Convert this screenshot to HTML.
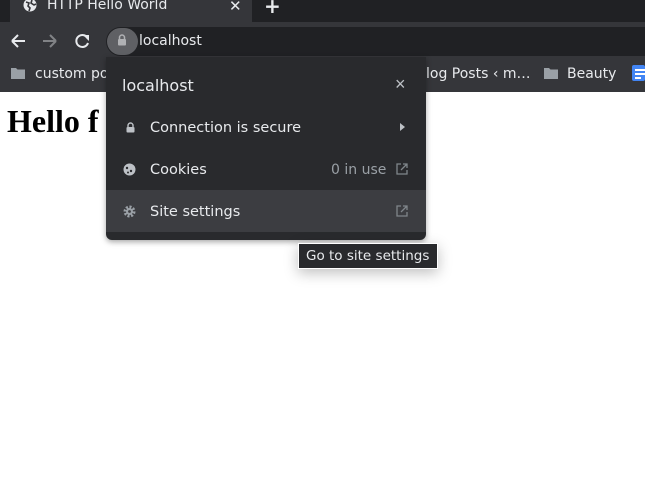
<!DOCTYPE html>
<html><head><style>
*{margin:0;padding:0;box-sizing:border-box}
body{width:645px;height:478px;overflow:hidden;background:#fff;font-family:"Liberation Sans","DejaVu Sans",sans-serif;position:relative}
.a{position:absolute}
.t{color:#e8eaed;font-family:"DejaVu Sans","Liberation Sans",sans-serif}
</style></head><body>
<div class="a" style="left:0;top:0;width:645px;height:22px;background:#202124"></div>
<div class="a" style="left:10px;top:0;width:242px;height:22px;background:#35363a"></div>
<div class="a" style="left:0;top:0;width:10px;height:22px;background:#202124;border-radius:0 0 8px 0"></div>
<div class="a" style="left:252px;top:0;width:393px;height:22px;background:#202124;border-radius:0 0 0 8px"></div>
<svg class="a" style="left:23px;top:-2px" width="14" height="14" viewBox="0 0 14 14"><circle cx="7" cy="7" r="6.5" fill="#e8eaed"/><path d="M3 4 L6 5 L5 8 L7 10 L6 13 M9 2 L8 5 L11 7 L13 6" stroke="#35363a" stroke-width="1.6" fill="none"/></svg>
<div class="a t" style="left:47px;top:-3px;font-size:14px">HTTP Hello World</div>
<div class="a t" style="left:229px;top:-3px;font-size:15px">✕</div>
<div class="a t" style="left:264px;top:-6px;font-size:20px;font-weight:bold">+</div>
<div class="a" style="left:0;top:22px;width:645px;height:34px;background:#35363a"></div>
<svg class="a" style="left:10px;top:32px" width="80" height="18" viewBox="0 0 80 18"><path d="M2 9H15M2 9L8 3M2 9L8 15" stroke="#e8eaed" stroke-width="2" fill="none"/><path d="M33 9H46M46 9L40 3M46 9L40 15" stroke="#818386" stroke-width="2" fill="none"/><path d="M79 7A6 6 0 1 0 79 11" stroke="#e8eaed" stroke-width="2" fill="none" transform="translate(-1,0)"/><path d="M74 3H80V9Z" fill="#e8eaed" transform="translate(-1,0)"/></svg>
<div class="a" style="left:106px;top:27px;width:560px;height:29px;background:#202124;border-radius:15px"></div>
<div class="a" style="left:107px;top:28px;width:31px;height:27px;background:#5f6064;border-radius:14px"></div>
<svg class="a" style="left:117px;top:34px" width="10" height="12" viewBox="0 0 10 12"><path d="M2.5 5V3.5A2.5 2.5 0 0 1 7.5 3.5V5" stroke="#b0b1b4" stroke-width="1.5" fill="none"/><rect x="1" y="5" width="8" height="6.5" rx="1" fill="#b0b1b4"/></svg>
<div class="a t" style="left:139px;top:33px;font-size:14px">localhost</div>
<div class="a" style="left:0;top:56px;width:645px;height:36px;background:#35363a"></div>
<svg class="a" style="left:11px;top:67px" width="14" height="12" viewBox="0 0 14 12"><path d="M0 1H5L6.5 2.5H14V12H0Z" fill="#9aa0a6"/></svg>
<div class="a t" style="left:35px;top:66px;font-size:14px">custom po</div>
<div class="a t" style="left:426px;top:66px;font-size:14px">log Posts ‹ m…</div>
<svg class="a" style="left:544px;top:67px" width="14" height="12" viewBox="0 0 14 12"><path d="M0 1H5L6.5 2.5H14V12H0Z" fill="#9aa0a6"/></svg>
<div class="a t" style="left:567px;top:66px;font-size:14px">Beauty</div>
<div class="a" style="left:632px;top:65px;width:13px;height:16px;background:#4285f4;border-radius:2px"></div>
<div class="a" style="left:635px;top:69px;width:10px;height:2px;background:#fff"></div>
<div class="a" style="left:635px;top:73px;width:10px;height:2px;background:#fff"></div>
<div class="a" style="left:635px;top:77px;width:6px;height:2px;background:#fff"></div>
<div class="a" style="left:7px;top:103px;font-family:'Liberation Serif',serif;font-weight:bold;font-size:32px;color:#000">Hello f</div>
<div class="a" style="left:106px;top:57px;width:320px;height:183px;background:#292a2d;border-radius:0 0 6px 6px;box-shadow:0 2px 6px rgba(0,0,0,.35);overflow:hidden">
 <div class="a t" style="left:16px;top:19px;font-size:16px">localhost</div>
 <div class="a" style="left:289px;top:17px;font-size:18px;color:#bdc1c6">×</div>
 <svg class="a" style="left:20px;top:65px" width="9" height="11" viewBox="0 0 9 11"><path d="M2 5V3.5A2.5 2.5 0 0 1 7 3.5V5" stroke="#bdc1c6" stroke-width="1.4" fill="none"/><rect x="0.5" y="5" width="8" height="5.5" rx="1" fill="#bdc1c6"/></svg>
 <div class="a t" style="left:44px;top:63px;font-size:14.5px">Connection is secure</div>
 <div class="a" style="left:294px;top:66px;width:0;height:0;border-left:5px solid #bdc1c6;border-top:4px solid transparent;border-bottom:4px solid transparent"></div>
 <svg class="a" style="left:17px;top:106px" width="13" height="13" viewBox="0 0 13 13"><circle cx="6.5" cy="6.5" r="6" fill="#bdc1c6"/><circle cx="4" cy="5" r="1.2" fill="#292a2d"/><circle cx="8" cy="8" r="1.2" fill="#292a2d"/><circle cx="5" cy="9.5" r="1" fill="#292a2d"/></svg>
 <div class="a t" style="left:44px;top:105px;font-size:14.5px">Cookies</div>
 <div class="a" style="left:225px;top:105px;font-size:14px;color:#9aa0a6;font-family:'DejaVu Sans',sans-serif">0 in use</div>
 <svg class="a" style="left:290px;top:106px" width="12" height="12" viewBox="0 0 12 12"><path d="M5 1H1V11H11V7M7 1H11V5M11 1L5 7" stroke="#80868b" stroke-width="1.3" fill="none"/></svg>
 <div class="a" style="left:0;top:133px;width:320px;height:42px;background:#3c3d41"></div>
 <svg class="a" style="left:17px;top:148px" width="13" height="13" viewBox="0 0 13 13"><circle cx="6.5" cy="6.5" r="4.5" fill="none" stroke="#9aa0a6" stroke-width="3" stroke-dasharray="2 1.5"/><circle cx="6.5" cy="6.5" r="3.5" fill="#9aa0a6"/><circle cx="6.5" cy="6.5" r="1.4" fill="#3c3d41"/></svg>
 <div class="a t" style="left:44px;top:147px;font-size:14.5px">Site settings</div>
 <svg class="a" style="left:290px;top:148px" width="12" height="12" viewBox="0 0 12 12"><path d="M5 1H1V11H11V7M7 1H11V5M11 1L5 7" stroke="#80868b" stroke-width="1.3" fill="none"/></svg>
</div>
<div class="a" style="left:298px;top:243px;width:140px;height:26px;background:#292a2d;border:1px solid #fff;box-shadow:0 4px 14px rgba(0,0,0,.25)"></div>
<div class="a t" style="left:306px;top:248px;font-size:13.5px">Go to site settings</div>
</body></html>
